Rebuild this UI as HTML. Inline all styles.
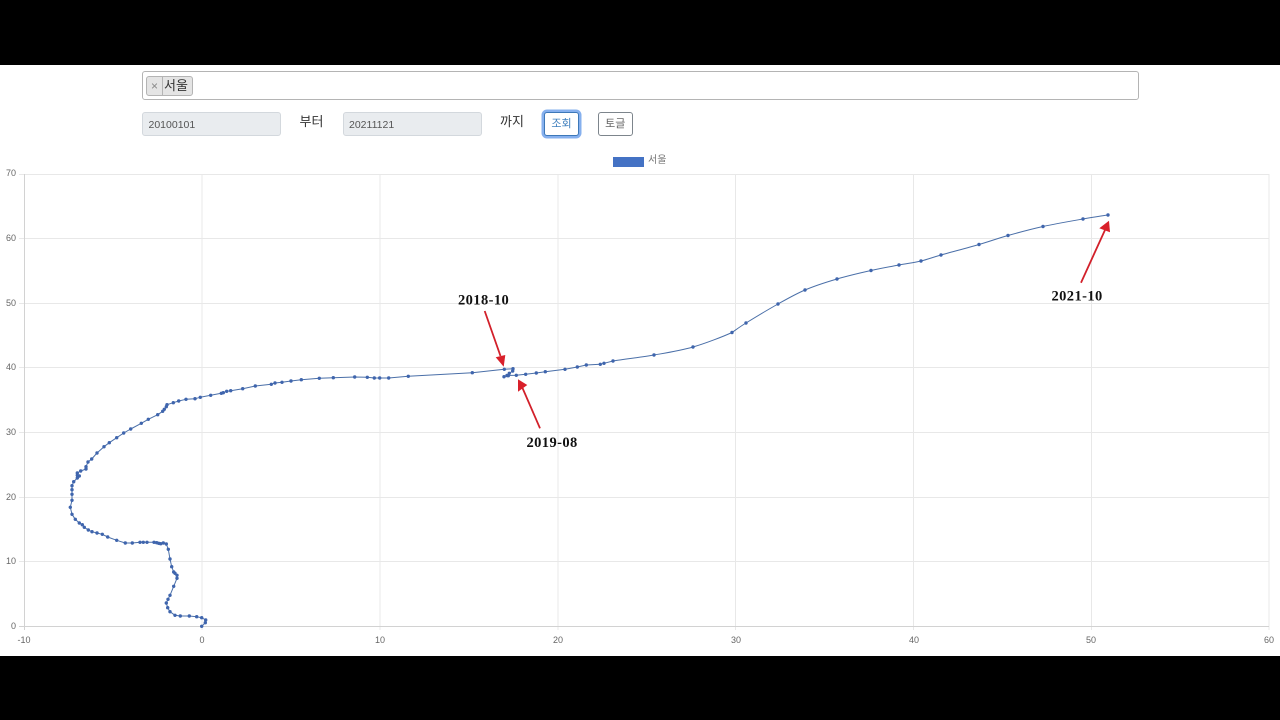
<!DOCTYPE html>
<html lang="ko">
<head>
<meta charset="utf-8">
<title>서울</title>
<style>
html,body{margin:0;padding:0;width:1280px;height:720px;overflow:hidden;background:#fff;font-family:"Liberation Sans","Noto Sans CJK KR",sans-serif;color:#333}
.bar{position:absolute;left:0;width:1280px;background:#000}
.a{position:absolute;box-sizing:border-box}
.wrap{position:absolute;left:0;top:0;width:1280px;height:720px;filter:blur(.35px)}
.date{background:#e9ecef;border:1px solid #d3d8dd;border-radius:3px;font-size:10.5px;color:#555;line-height:25px;padding-left:5.5px;height:24px;top:112px;width:139px}
.lab{font-size:13px;color:#333;top:113px;line-height:18px}
.btn{top:112px;height:24px;border-radius:3px;font-size:11px;text-align:center;line-height:22px;background:#fff}
svg{position:absolute;left:0;top:0}
</style>
</head>
<body>
<div class="wrap">
<div class="a" style="left:141.500px;top:71px;width:997.500px;height:29px;border:1px solid #b4b4b4;border-radius:3px"></div>
<div class="a" style="left:146px;top:76px;width:47px;height:20px;background:#e4e4e4;border:1px solid #b4b4b4;border-radius:3px"></div>
<div class="a" style="left:162px;top:76px;width:1px;height:20px;background:#b4b4b4"></div>
<div class="a" style="left:150px;top:78px;width:9px;font-size:12px;line-height:17px;color:#888;text-align:center">×</div>
<div class="a" style="left:164px;top:77px;font-size:13px;line-height:17px;color:#333">서울</div>

<div class="a date" style="left:142px">20100101</div>
<div class="a lab" style="left:299.500px">부터</div>
<div class="a date" style="left:342.500px;width:139.500px">20211121</div>
<div class="a lab" style="left:500px">까지</div>
<div class="a btn" style="left:544px;width:35px;height:23.500px;border:1px solid #3d78b8;color:#3f7fbd;box-shadow:0 0 0 2.500px #86b0ee">조회</div>
<div class="a btn" style="left:597.500px;width:35.500px;border:1px solid #7d858c;color:#666">토글</div>

<div class="a" style="left:613px;top:157px;width:31px;height:9.500px;background:#4472c4"></div>
<div class="a" style="left:648px;top:154px;font-size:10px;line-height:13px;color:#777">서울</div>

<svg width="1280" height="720" viewBox="0 0 1280 720" xmlns="http://www.w3.org/2000/svg">
<g stroke="#e8e8e8" stroke-width="1" fill="none">
<path d="M19 174.500H1269M19 238.500H1269M19 303.500H1269M19 367.500H1269M19 432.500H1269M19 497.500H1269M19 561.500H1269"/>
<path d="M202 174V630M380 174V630M558 174V630M735.500 174V630M913.500 174V630M1091.500 174V630M1269 174V630"/>
</g>
<path d="M19 626.500H1269M24.500 174V630" stroke="#d2d2d2" stroke-width="1" fill="none"/>
<g font-family="Liberation Sans, sans-serif" font-size="9" fill="#666" text-anchor="end">
<text x="16" y="176">70</text><text x="16" y="241">60</text><text x="16" y="306">50</text><text x="16" y="370">40</text><text x="16" y="435">30</text><text x="16" y="500">20</text><text x="16" y="564">10</text><text x="16" y="629">0</text>
</g>
<g font-family="Liberation Sans, sans-serif" font-size="9" fill="#666" text-anchor="middle">
<text x="24" y="643">-10</text><text x="202" y="643">0</text><text x="380" y="643">10</text><text x="558" y="643">20</text><text x="736" y="643">30</text><text x="914" y="643">40</text><text x="1091" y="643">50</text><text x="1269" y="643">60</text>
</g>
<path fill="none" stroke="#4a6fa8" stroke-width="1" stroke-linejoin="round" d="M201.700 626.300L205.300 622.700L205.700 620L201.700 617.700L196.700 616.700L189.300 616L180.300 616L175 615.300L170 611.700L167.700 607.700L166.300 603L168 599.300L170 595.300L173.700 586.300L177 578.300L177 575.300L175 573.300L173.700 572L171.700 566.700L170 559L168.300 549.300L166.300 544L163.300 543L160.700 543.700L158.700 543.300L156.700 542.700L154 542.300L147 542.300L143.300 542.300L140 542.300L132.300 543L125.300 543L116.700 540.300L107.700 537L102.300 534.300L97 533L92 531.700L88.300 530L84.300 527.300L82.300 524.700L79.300 523L75.300 519.300L72 514.300L70.300 507.300L72 500.300L72 494.300L72 489.700L72 485.700L73.700 481.700L77.300 478L79.300 476L77.300 475.300L77.300 473L80.700 471L86 469L86 466.700L88 462L91.700 459L97 453L104 446.700L109.300 442.700L116.700 437.700L123.700 433L130.700 429L141.300 423.300L148.300 419.300L157.700 414.700L162.700 411.300L164.300 409.300L166.300 406.700L167 404.700L173.300 402.700L178.700 401L186 399.300L195 398.700L200.300 397.300L210.700 395.300L221.300 393.300L223.300 392.700L226.700 391.300L230.700 390.700L242.700 388.700L255.300 386L271.300 384.300L275 383L282 382.300L291 381L301.300 379.700L319.300 378.300L333.300 377.700L354.700 377L367.300 377.300L374.300 378L379.700 378L388.700 378L408.300 376.300L472.300 372.700L504.300 369.300L513 368.700L512.700 371L509.300 373.300L508.300 375.700L504 376.700L507 375.500L516.300 375.300L525.700 374.300L536.300 373L545.300 371.700L565 369.300L577.300 367L586.300 365L600.300 364.300L604 363.300L613 361C621.300 359.600 640.700 357.300 654 355C667.300 352.700 680 350.800 693 347C706 343.200 723.200 336.500 732 332.500C737 329 741 326 746 323C753.700 318.250 768.200 309.500 778 304C787.800 298.500 795.200 294.200 805 290C814.800 285.800 826 282.250 837 279C848 275.750 860.700 272.800 871 270.500C881.300 268.200 890.700 266.600 899 265C907.300 263.400 914 262.700 921 261C928 259.300 931.300 257.750 941 255C950.700 252.250 967.800 247.750 979 244.500C990.200 241.250 997.300 238.500 1008 235.500C1018.700 232.500 1030.500 229.250 1043 226.500C1055.500 223.750 1072.200 220.900 1083 219C1093.800 217.100 1100 216 1108 215"/>
<g fill="#3f65ad" stroke="none">
<circle cx="201.700" cy="626.300" r="1.700"/><circle cx="205.300" cy="622.700" r="1.700"/><circle cx="205.700" cy="620" r="1.700"/><circle cx="201.700" cy="617.700" r="1.700"/><circle cx="196.700" cy="616.700" r="1.700"/><circle cx="189.300" cy="616" r="1.700"/><circle cx="180.300" cy="616" r="1.700"/><circle cx="175" cy="615.300" r="1.700"/><circle cx="170" cy="611.700" r="1.700"/><circle cx="167.700" cy="607.700" r="1.700"/><circle cx="166.300" cy="603" r="1.700"/><circle cx="168" cy="599.300" r="1.700"/><circle cx="170" cy="595.300" r="1.700"/><circle cx="173.700" cy="586.300" r="1.700"/><circle cx="177" cy="578.300" r="1.700"/><circle cx="177" cy="575.300" r="1.700"/><circle cx="175" cy="573.300" r="1.700"/><circle cx="173.700" cy="572" r="1.700"/><circle cx="171.700" cy="566.700" r="1.700"/><circle cx="170" cy="559" r="1.700"/><circle cx="168.300" cy="549.300" r="1.700"/><circle cx="166.300" cy="544" r="1.700"/><circle cx="163.300" cy="543" r="1.700"/><circle cx="160.700" cy="543.700" r="1.700"/><circle cx="158.700" cy="543.300" r="1.700"/><circle cx="156.700" cy="542.700" r="1.700"/><circle cx="154" cy="542.300" r="1.700"/><circle cx="147" cy="542.300" r="1.700"/><circle cx="143.300" cy="542.300" r="1.700"/><circle cx="140" cy="542.300" r="1.700"/><circle cx="132.300" cy="543" r="1.700"/><circle cx="125.300" cy="543" r="1.700"/><circle cx="116.700" cy="540.300" r="1.700"/><circle cx="107.700" cy="537" r="1.700"/><circle cx="102.300" cy="534.300" r="1.700"/><circle cx="97" cy="533" r="1.700"/><circle cx="92" cy="531.700" r="1.700"/><circle cx="88.300" cy="530" r="1.700"/><circle cx="84.300" cy="527.300" r="1.700"/><circle cx="82.300" cy="524.700" r="1.700"/><circle cx="79.300" cy="523" r="1.700"/><circle cx="75.300" cy="519.300" r="1.700"/><circle cx="72" cy="514.300" r="1.700"/><circle cx="70.300" cy="507.300" r="1.700"/><circle cx="72" cy="500.300" r="1.700"/><circle cx="72" cy="494.300" r="1.700"/><circle cx="72" cy="489.700" r="1.700"/><circle cx="72" cy="485.700" r="1.700"/><circle cx="73.700" cy="481.700" r="1.700"/><circle cx="77.300" cy="478" r="1.700"/><circle cx="79.300" cy="476" r="1.700"/><circle cx="77.300" cy="475.300" r="1.700"/><circle cx="77.300" cy="473" r="1.700"/><circle cx="80.700" cy="471" r="1.700"/><circle cx="86" cy="469" r="1.700"/><circle cx="86" cy="466.700" r="1.700"/><circle cx="88" cy="462" r="1.700"/><circle cx="91.700" cy="459" r="1.700"/><circle cx="97" cy="453" r="1.700"/><circle cx="104" cy="446.700" r="1.700"/><circle cx="109.300" cy="442.700" r="1.700"/><circle cx="116.700" cy="437.700" r="1.700"/><circle cx="123.700" cy="433" r="1.700"/><circle cx="130.700" cy="429" r="1.700"/><circle cx="141.300" cy="423.300" r="1.700"/><circle cx="148.300" cy="419.300" r="1.700"/><circle cx="157.700" cy="414.700" r="1.700"/><circle cx="162.700" cy="411.300" r="1.700"/><circle cx="164.300" cy="409.300" r="1.700"/><circle cx="166.300" cy="406.700" r="1.700"/><circle cx="167" cy="404.700" r="1.700"/><circle cx="173.300" cy="402.700" r="1.700"/><circle cx="178.700" cy="401" r="1.700"/><circle cx="186" cy="399.300" r="1.700"/><circle cx="195" cy="398.700" r="1.700"/><circle cx="200.300" cy="397.300" r="1.700"/><circle cx="210.700" cy="395.300" r="1.700"/><circle cx="221.300" cy="393.300" r="1.700"/><circle cx="223.300" cy="392.700" r="1.700"/><circle cx="226.700" cy="391.300" r="1.700"/><circle cx="230.700" cy="390.700" r="1.700"/><circle cx="242.700" cy="388.700" r="1.700"/><circle cx="255.300" cy="386" r="1.700"/><circle cx="271.300" cy="384.300" r="1.700"/><circle cx="275" cy="383" r="1.700"/><circle cx="282" cy="382.300" r="1.700"/><circle cx="291" cy="381" r="1.700"/><circle cx="301.300" cy="379.700" r="1.700"/><circle cx="319.300" cy="378.300" r="1.700"/><circle cx="333.300" cy="377.700" r="1.700"/><circle cx="354.700" cy="377" r="1.700"/><circle cx="367.300" cy="377.300" r="1.700"/><circle cx="374.300" cy="378" r="1.700"/><circle cx="379.700" cy="378" r="1.700"/><circle cx="388.700" cy="378" r="1.700"/><circle cx="408.300" cy="376.300" r="1.700"/><circle cx="472.300" cy="372.700" r="1.700"/><circle cx="504.300" cy="369.300" r="1.700"/><circle cx="513" cy="368.700" r="1.700"/><circle cx="512.700" cy="371" r="1.700"/><circle cx="509.300" cy="373.300" r="1.700"/><circle cx="508.300" cy="375.700" r="1.700"/><circle cx="504" cy="376.700" r="1.700"/><circle cx="507" cy="375.500" r="1.700"/><circle cx="516.300" cy="375.300" r="1.700"/><circle cx="525.700" cy="374.300" r="1.700"/><circle cx="536.300" cy="373" r="1.700"/><circle cx="545.300" cy="371.700" r="1.700"/><circle cx="565" cy="369.300" r="1.700"/><circle cx="577.300" cy="367" r="1.700"/><circle cx="586.300" cy="365" r="1.700"/><circle cx="600.300" cy="364.300" r="1.700"/><circle cx="604" cy="363.300" r="1.700"/><circle cx="613" cy="361" r="1.700"/><circle cx="654" cy="355" r="1.700"/><circle cx="693" cy="347" r="1.700"/><circle cx="732" cy="332.500" r="1.700"/><circle cx="746" cy="323" r="1.700"/><circle cx="778" cy="304" r="1.700"/><circle cx="805" cy="290" r="1.700"/><circle cx="837" cy="279" r="1.700"/><circle cx="871" cy="270.500" r="1.700"/><circle cx="899" cy="265" r="1.700"/><circle cx="921" cy="261" r="1.700"/><circle cx="941" cy="255" r="1.700"/><circle cx="979" cy="244.500" r="1.700"/><circle cx="1008" cy="235.500" r="1.700"/><circle cx="1043" cy="226.500" r="1.700"/><circle cx="1083" cy="219" r="1.700"/><circle cx="1108" cy="215" r="1.700"/>
</g>
<g stroke="#d2202a" stroke-width="1.800" fill="none">
<path d="M484.700 311L500.500 356"/>
<path d="M540 428.300L522.500 388"/>
<path d="M1081 282.700L1105 230"/>
</g>
<g fill="#d9202a" stroke="none">
<path d="M503.700 366.700L495.700 357.300L505.300 355Z"/>
<path d="M518 379.300L527.300 385L518 391.700Z"/>
<path d="M1109 220.700L1110 232.300L1099.300 228.300Z"/>
</g>
<g font-family="Liberation Serif, serif" font-weight="bold" font-size="14.500" fill="#111" letter-spacing=".4">
<text x="458" y="304.500">2018-10</text>
<text x="526.500" y="447">2019-08</text>
<text x="1051.500" y="300.500">2021-10</text>
</g>
</svg>
</div>
<div class="bar" style="top:0;height:65px"></div>
<div class="bar" style="top:656px;height:64px"></div>
</body>
</html>
